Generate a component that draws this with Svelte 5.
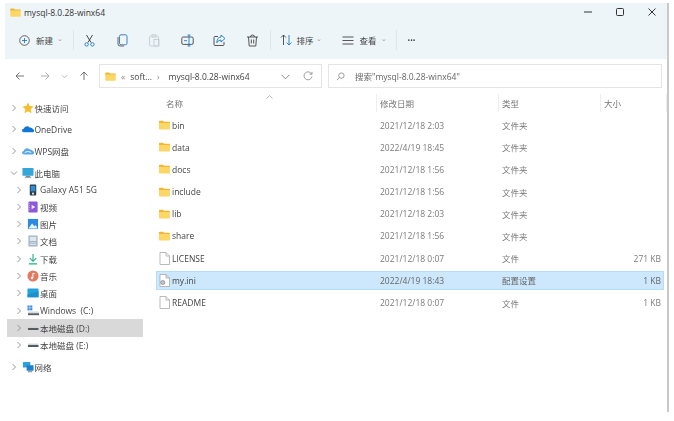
<script>
  const files = [
    { name: 'bin', date: '2021/12/18 2:03', type: '文件夹', size: '', icon: 'folder' },
    { name: 'data', date: '2022/4/19 18:45', type: '文件夹', size: '', icon: 'folder' },
    { name: 'docs', date: '2021/12/18 1:56', type: '文件夹', size: '', icon: 'folder' },
    { name: 'include', date: '2021/12/18 1:56', type: '文件夹', size: '', icon: 'folder' },
    { name: 'lib', date: '2021/12/18 2:03', type: '文件夹', size: '', icon: 'folder' },
    { name: 'share', date: '2021/12/18 1:56', type: '文件夹', size: '', icon: 'folder' },
    { name: 'LICENSE', date: '2021/12/18 0:07', type: '文件', size: '271 KB', icon: 'file' },
    { name: 'my.ini', date: '2022/4/19 18:43', type: '配置设置', size: '1 KB', icon: 'ini', selected: true },
    { name: 'README', date: '2021/12/18 0:07', type: '文件', size: '1 KB', icon: 'file' }
  ];

  const top = [
    { label: '快速访问', icon: 'star' },
    { label: 'OneDrive', icon: 'cloud' },
    { label: 'WPS网盘', icon: 'wps' }
  ];

  const pc = [
    { label: 'Galaxy A51 5G', icon: 'phone' },
    { label: '视频', icon: 'video' },
    { label: '图片', icon: 'picture' },
    { label: '文档', icon: 'doc' },
    { label: '下载', icon: 'download' },
    { label: '音乐', icon: 'music' },
    { label: '桌面', icon: 'desktop' },
    { label: 'Windows  (C:)', icon: 'windrive' },
    { label: '本地磁盘 (D:)', icon: 'drive', active: true },
    { label: '本地磁盘 (E:)', icon: 'drive' }
  ];
</script>

{#snippet chevron(open)}
  <svg class="chev" width="8" height="8" viewBox="0 0 8 8">
    {#if open}
      <path d="M1 2.5 L4 5.5 L7 2.5" />
    {:else}
      <path d="M2.5 1 L5.5 4 L2.5 7" />
    {/if}
  </svg>
{/snippet}

{#snippet folderIcon(w, h)}
  <svg width={w} height={h} viewBox="0 0 14 12">
    <path d="M0 1.5 Q0 .5 1 .5 H5 L6.5 2 H13 Q14 2 14 3 V4 H0 Z" fill="#f2b632" />
    <path d="M0 3.4 H14 V10.8 Q14 11.8 13 11.8 H1 Q0 11.8 0 10.8 Z" fill="#fcd768" />
  </svg>
{/snippet}

{#snippet navIcon(name)}
  <svg width="12" height="12" viewBox="0 0 13 13">
    {#if name === 'star'}
      <path d="M6.5 .5 L8.3 4.4 L12.6 4.9 L9.4 7.8 L10.3 12.2 L6.5 10 L2.7 12.2 L3.6 7.8 L.4 4.9 L4.7 4.4 Z" fill="#f7bd2a" />
    {:else if name === 'cloud'}
      <path d="M1.8 10 Q0 9.8 0 8 Q0 6.4 1.8 6.2 Q2.6 3.4 5.4 3.4 Q7.4 3.4 8.3 5 Q11 4.8 12 6.8 Q13.4 7.2 13 9 Q12.7 10 11.6 10 Z" fill="#0f78d4" />
    {:else if name === 'wps'}
      <path d="M2 10.2 Q0 10 0 8.2 Q0 6.6 1.8 6.4 Q2.6 3.4 5.4 3.4 Q7.4 3.4 8.3 5 Q11 4.8 12 6.8 Q13.4 7.2 13 9 Q12.7 10.2 11.6 10.2 Z" fill="#58a8ec" />
      <path d="M3 8 Q6 6 10 8" stroke="#fff" stroke-width="1" fill="none" />
    {:else if name === 'monitor'}
      <rect x=".5" y="1" width="12" height="8.5" rx=".6" fill="#35a6d8" />
      <rect x="4" y="9.5" width="5" height="1.6" fill="#6f8ea0" />
      <rect x="3" y="11" width="7" height="1" fill="#8aa0ad" />
    {:else if name === 'phone'}
      <rect x="3" y=".5" width="7" height="12" rx="1" fill="#2f3b46" />
      <rect x="4" y="2" width="5" height="6" fill="#2c8fd6" />
      <rect x="5.4" y="9.4" width="2.2" height="2" fill="#dde3e8" />
    {:else if name === 'video'}
      <rect x="1.5" y=".5" width="10" height="12" rx="1" fill="#8d58d8" />
      <path d="M5 4 L9 6.5 L5 9 Z" fill="#f2e8ff" />
      <path d="M2.6 2 V11" stroke="#c7a8f0" stroke-dasharray="1 1.3" />
    {:else if name === 'picture'}
      <rect x="1" y="1" width="11" height="11" fill="#2d8ae0" />
      <path d="M1.5 11.5 L5.5 6 L8 9 L9.5 7.5 L11.5 11.5 Z" fill="#eaf4fc" />
    {:else if name === 'doc'}
      <rect x="1.5" y=".5" width="10" height="12" rx=".6" fill="#a4b6c8" />
      <rect x="3" y="2" width="7" height="4.5" fill="#dfe7ef" />
      <path d="M3 8.5 H10 M3 10.3 H10" stroke="#eef2f6" stroke-width=".8" />
    {:else if name === 'download'}
      <path d="M6.5 1 V8.5 M3 5.5 L6.5 9 L10 5.5 M2 11.8 H11" stroke="#22b27f" stroke-width="1.2" fill="none" />
    {:else if name === 'music'}
      <circle cx="6.5" cy="6.5" r="6" fill="#e3795f" />
      <path d="M6.4 3.4 L8.6 4.2 M6.4 3.4 V8.4" stroke="#fff" stroke-width="1.1" fill="none" />
      <circle cx="5.4" cy="8.6" r="1.3" fill="#fff" />
    {:else if name === 'desktop'}
      <rect x=".5" y="1.5" width="12" height="9.5" rx=".6" fill="#22a3dc" />
      <path d="M.5 8 L12.5 5 V11 H.5 Z" fill="#1b90cd" />
    {:else if name === 'windrive'}
      <rect x=".5" y=".5" width="2.4" height="2.4" fill="#3a8be0" />
      <rect x="3.4" y=".5" width="2.4" height="2.4" fill="#3a8be0" />
      <rect x=".5" y="3.4" width="2.4" height="2.4" fill="#3a8be0" />
      <rect x="3.4" y="3.4" width="2.4" height="2.4" fill="#3a8be0" />
      <rect x="1" y="7" width="12" height="2" fill="#d6dadd" />
      <rect x="1" y="9" width="12" height="2" fill="#555c60" />
    {:else if name === 'drive'}
      <rect x="1" y="5" width="11.5" height="1.4" fill="#cfd3d6" />
      <rect x="1" y="6.4" width="11.5" height="2.2" rx=".4" fill="#555c60" />
    {:else if name === 'network'}
      <rect x="1" y="1" width="8" height="6" rx=".6" fill="#2aa0dc" />
      <rect x="5" y="4.5" width="7.5" height="6" rx=".6" fill="#1d83c6" />
      <rect x="6.5" y="11" width="4.5" height="1.2" fill="#7c93a3" />
    {/if}
  </svg>
{/snippet}

<div class="window">
  <div class="chrome">
    <div class="titlebar">
      {@render folderIcon(11, 9)}
      <span class="title">mysql-8.0.28-winx64</span>
      <div class="winbtns">
        <svg width="10" height="10" viewBox="0 0 10 10"><path d="M1 5 H9" /></svg>
        <svg width="10" height="10" viewBox="0 0 10 10"><rect x="1.5" y="1.5" width="7" height="7" rx="1" /></svg>
        <svg width="10" height="10" viewBox="0 0 10 10"><path d="M1.5 1.5 L8.5 8.5 M8.5 1.5 L1.5 8.5" /></svg>
      </div>
    </div>
    <div class="toolbar">
      <button class="tool new">
        <svg width="11" height="11" viewBox="0 0 11 11"><circle cx="5.5" cy="5.5" r="4.8" /><path d="M5.5 3 V8 M3 5.5 H8" stroke="#1c7fc4" /></svg>
        <span>新建</span><span class="caret">⌄</span>
      </button>
      <i class="sep sep-new"></i>
      <button class="tool icon-tool" aria-label="剪切">
        <svg width="13" height="13" viewBox="0 0 13 13"><path d="M3.5 1 L8 8.5 M9.5 1 L5 8.5" stroke="#333" /><circle cx="3.6" cy="10.4" r="1.7" stroke="#1c7fc4" /><circle cx="9.4" cy="10.4" r="1.7" stroke="#1c7fc4" /></svg>
      </button>
      <button class="tool icon-tool" aria-label="复制">
        <svg width="13" height="13" viewBox="0 0 13 13"><rect x="3.5" y=".8" width="7.5" height="10" rx="1.6" stroke="#2b77b6" /><path d="M2 3 V10 Q2 12 4 12 H8" stroke="#555" /></svg>
      </button>
      <button class="tool icon-tool faint" aria-label="粘贴">
        <svg width="13" height="13" viewBox="0 0 13 13"><rect x="1.5" y="2" width="9" height="10" rx="1" /><rect x="4" y=".8" width="4" height="2.4" /><rect x="6" y="5.5" width="5" height="6.5" /></svg>
      </button>
      <button class="tool icon-tool" aria-label="重命名">
        <svg width="13" height="13" viewBox="0 0 13 13"><rect x=".8" y="3" width="11.4" height="7.4" rx="1.4" stroke="#444" /><path d="M8 1 V12 M6.6 1 H9.4 M6.6 12 H9.4" stroke="#1c7fc4" /><path d="M3 6.7 H6" stroke="#1c7fc4" /></svg>
      </button>
      <button class="tool icon-tool" aria-label="共享">
        <svg width="13" height="13" viewBox="0 0 13 13"><path d="M5 2.5 H2 Q1 2.5 1 3.5 V10.5 Q1 11.5 2 11.5 H10 Q11 11.5 11 10.5 V8" stroke="#444" /><path d="M8 1 L12 4.5 L8 8 V6 Q5 6 3.8 8.8 Q4 3.2 8 3 Z" stroke="#1c7fc4" /></svg>
      </button>
      <button class="tool icon-tool" aria-label="删除">
        <svg width="13" height="13" viewBox="0 0 13 13"><path d="M1 3 H12 M4.5 3 Q4.5 1 6.5 1 Q8.5 1 8.5 3 M2.5 3 L3.2 12 H9.8 L10.5 3 M5.3 5.5 V9.5 M7.7 5.5 V9.5" stroke="#444" /></svg>
      </button>
      <i class="sep sep-sort"></i>
      <button class="tool sort">
        <svg width="13" height="12" viewBox="0 0 13 12"><path d="M3.5 11 V1 M1 3.5 L3.5 1 L6 3.5" stroke="#444" /><path d="M9 1 V11 M6.5 8.5 L9 11 L11.5 8.5" stroke="#1c7fc4" /></svg>
        <span>排序</span><span class="caret">⌄</span>
      </button>
      <button class="tool view">
        <svg width="12" height="9" viewBox="0 0 12 9"><path d="M.5 1 H11.5 M.5 4.5 H11.5 M.5 8 H11.5" stroke="#444" /></svg>
        <span>查看</span><span class="caret">⌄</span>
      </button>
      <i class="sep sep-view"></i>
      <button class="tool dots" aria-label="更多">•••</button>
    </div>
  </div>

  <div class="addressbar">
    <div class="navbtns">
      <svg class="nav" width="10" height="10" viewBox="0 0 10 10"><path d="M9 5 H1 M4.5 1.5 L1 5 L4.5 8.5" /></svg>
      <svg class="nav light" width="10" height="10" viewBox="0 0 10 10"><path d="M1 5 H9 M5.5 1.5 L9 5 L5.5 8.5" /></svg>
      <svg class="nav light small" width="7" height="7" viewBox="0 0 8 8"><path d="M1 2.5 L4 5.5 L7 2.5" /></svg>
      <svg class="nav" width="10" height="10" viewBox="0 0 10 10"><path d="M5 9 V1 M1.5 4.5 L5 1 L8.5 4.5" /></svg>
    </div>
    <div class="path">
      {@render folderIcon(11, 9)}
      <span class="crumb muted">«</span>
      <span class="crumb">soft...</span>
      <span class="crumb muted arrow">›</span>
      <span class="crumb">mysql-8.0.28-winx64</span>
      <svg class="path-chev" width="9" height="9" viewBox="0 0 8 8"><path d="M.5 2.5 L4 6 L7.5 2.5" /></svg>
      <svg class="refresh" width="10" height="10" viewBox="0 0 10 10"><path d="M8.6 3 A4 4 0 1 0 9 5.5 M9 .8 V3.2 H6.6" /></svg>
    </div>
    <div class="search">
      <svg width="9" height="9" viewBox="0 0 10 10"><circle cx="6" cy="4" r="3" /><path d="M3.8 6.2 L1 9" /></svg>
      <span>搜索"mysql-8.0.28-winx64"</span>
    </div>
  </div>

  <div class="body">
    <nav class="sidebar">
      {#each top as item}
        <div class="nav-row root">
          {@render chevron(false)}
          {@render navIcon(item.icon)}
          <span>{item.label}</span>
        </div>
      {/each}
      <div class="nav-row root pc-head">
        {@render chevron(true)}
        {@render navIcon('monitor')}
        <span>此电脑</span>
      </div>
      {#each pc as item}
        <div class="nav-row child" class:active={item.active}>
          {@render chevron(false)}
          {@render navIcon(item.icon)}
          <span>{item.label}</span>
        </div>
      {/each}
      <div class="nav-row root net">
        {@render chevron(false)}
        {@render navIcon('network')}
        <span>网络</span>
      </div>
    </nav>

    <section class="list">
      <svg class="sort-up" width="7" height="4" viewBox="0 0 7 4"><path d="M.5 3.5 L3.5 .5 L6.5 3.5" /></svg>
      <div class="row head">
        <span class="c-name">名称</span>
        <span class="c-date">修改日期</span>
        <span class="c-type">类型</span>
        <span class="c-size">大小</span>
      </div>
      {#each files as f}
        <div class="row" class:selected={f.selected}>
          <span class="c-name name">
            {#if f.icon === 'folder'}
              {@render folderIcon(11, 10)}
            {:else}
              <svg width="11" height="13" viewBox="0 0 11 13">
                <path d="M1 .5 H7 L10.5 4 V12.5 H1 Z M7 .5 V4 H10.5" fill="#fff" stroke="#a9a9a9" stroke-width=".8" />
                {#if f.icon === 'ini'}
                  <circle cx="3.8" cy="8.5" r="2.1" fill="#bfc4c8" stroke="#777" stroke-width=".6" />
                {/if}
              </svg>
            {/if}
            <span>{f.name}</span>
          </span>
          <span class="c-date">{f.date}</span>
          <span class="c-type">{f.type}</span>
          <span class="c-size size">{f.size}</span>
        </div>
      {/each}
    </section>
  </div>
</div>

<style>
  :global(body) {
    margin: 0;
    background: #fff;
    overflow: hidden;
  }

  .window {
    width: 662px;
    height: 409px;
    margin: 3px 0 0 5px;
    border-right: 2px solid #c9c9c9;
    font-family: "Open Sans", "Noto Sans CJK SC", sans-serif;
    font-size: 8.5px;
    color: #555;
    filter: blur(0.4px);
  }

  .chrome {
    height: 56px;
    background: #eef5f8;
  }

  .titlebar {
    height: 18px;
    display: flex;
    align-items: center;
    padding-left: 5px;
    gap: 3px;
  }

  .title {
    color: #333;
  }

  .winbtns {
    margin-left: auto;
    display: flex;
    gap: 22px;
    padding-right: 10px;
  }

  .winbtns svg {
    fill: none;
    stroke: #333;
    stroke-width: 1;
  }

  .toolbar {
    height: 38px;
    display: flex;
    align-items: center;
    padding-left: 14px;
  }

  .tool {
    border: 0;
    background: none;
    padding: 0;
    font: inherit;
    color: #444;
    display: flex;
    align-items: center;
    gap: 6px;
  }

  .tool svg {
    fill: none;
    stroke-width: 0.9;
  }

  .tool.new svg {
    stroke: #555;
  }

  .caret {
    font-size: 7px;
    color: #999;
    margin-left: -2px;
    margin-top: -3px;
  }

  .icon-tool {
    width: 13px;
    margin-right: 19.6px;
  }

  .icon-tool.faint svg {
    stroke: #c4ced4;
  }

  .sep {
    width: 1px;
    height: 20px;
    background: #dfe6ea;
  }

  .sep-new {
    margin: 0 9px 0 10px;
  }

  .sep-sort {
    margin: 0 9px 0 -9px;
  }

  .tool.sort {
    gap: 4px;
    margin-right: 20px;
  }

  .sep-view {
    margin: 0 11px 0 9px;
  }

  .dots {
    font-size: 7px;
    color: #444;
  }

  .addressbar {
    height: 27px;
    margin-top: 5px;
    display: flex;
    align-items: flex-start;
    gap: 7px;
  }

  .navbtns {
    width: 87px;
    height: 24px;
    display: flex;
    align-items: center;
    gap: 15px;
    padding-left: 10px;
    box-sizing: border-box;
  }

  .nav {
    fill: none;
    stroke: #666;
    stroke-width: 0.9;
  }

  .nav.light {
    stroke: #a8a8a8;
  }

  .nav.small {
    margin: 0 -4px;
  }

  .path {
    width: 223px;
    height: 24px;
    border: 1px solid #e5e5e5;
    box-sizing: border-box;
    display: flex;
    align-items: center;
    gap: 5px;
    padding: 0 8px 0 5px;
    color: #444;
  }

  .muted {
    color: #888;
  }

  .arrow {
    margin-right: 4px;
  }

  .path-chev {
    margin-left: auto;
    margin-right: 8px;
    fill: none;
    stroke: #777;
    stroke-width: 0.8;
  }

  .refresh {
    fill: none;
    stroke: #888;
    stroke-width: 0.8;
  }

  .search {
    width: 334px;
    height: 24px;
    border: 1px solid #e5e5e5;
    box-sizing: border-box;
    display: flex;
    align-items: center;
    gap: 10px;
    padding-left: 7px;
    color: #666;
    margin-left: -1px;
  }

  .search svg {
    fill: none;
    stroke: #888;
    stroke-width: 0.9;
  }

  .body {
    display: flex;
    margin-top: 1px;
  }

  .sidebar {
    width: 136px;
    margin-right: 13px;
    padding: 5px 0 0 2px;
    flex: none;
  }

  .nav-row {
    display: flex;
    align-items: center;
    gap: 1px;
    height: 17.3px;
    color: #444;
    white-space: pre;
  }

  .nav-row.root {
    padding-left: 2.5px;
    height: 21.6px;
  }

  .nav-row.pc-head {
    margin-bottom: -2.5px;
  }

  .nav-row.child {
    padding-left: 8px;
  }

  .nav-row.active {
    background: #d9d9d9;
  }

  .nav-row.net {
    margin-top: 2px;
  }

  .chev {
    fill: none;
    stroke: #8a8a8a;
    stroke-width: 0.9;
    flex: none;
    margin-right: 3px;
  }

  .list {
    position: relative;
    width: 511px;
    padding-top: 2px;
  }

  .sort-up {
    position: absolute;
    left: 110px;
    top: 3px;
    fill: none;
    stroke: #aaa;
    stroke-width: 0.8;
  }

  .row {
    display: grid;
    grid-template-columns: 217px 122px 102px 1fr;
    align-items: center;
    height: 19px;
    margin: 0 3px 3.2px 0;
    padding-left: 3px;
    box-sizing: border-box;
    color: #7b7b7b;
  }

  .row.head {
    height: 18px;
    margin-bottom: 3.5px;
    color: #777;
  }

  .row.head span {
    padding-left: 3px;
    align-self: stretch;
    display: flex;
    align-items: center;
    border-left: 1px solid #eeeeee;
  }

  .row.head .c-name {
    border-left: 0;
    padding-left: 7px;
  }

  .row.head .c-size {
    border-right: 1px solid #eeeeee;
    margin-right: -3px;
  }

  .row.selected {
    background: #cde8fd;
    box-shadow: inset 0 0 0 1px #b5dcf8;
    color: #666;
  }

  .name {
    display: flex;
    align-items: center;
    gap: 2px;
    color: #444;
  }

  .c-date, .c-type {
    padding-left: 4px;
  }

  .size {
    text-align: right;
    padding-right: 3px;
  }
</style>
